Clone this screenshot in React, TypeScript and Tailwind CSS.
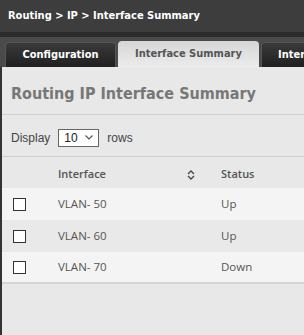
import React from 'react';

const rows = [
  { name: 'VLAN- 50', status: 'Up' },
  { name: 'VLAN- 60', status: 'Up' },
  { name: 'VLAN- 70', status: 'Down' },
];

const SortIcon = () => (
  <svg width="8" height="10" viewBox="0 0 8 10" fill="none" stroke="#444" strokeWidth="1.3">
    <path d="M1 4 L4 1 L7 4" />
    <path d="M1 6 L4 9 L7 6" />
  </svg>
);

export default function App() {
  return (
    <div className="w-[304px] h-[335px] overflow-hidden flex flex-col bg-[#4a4a4a]">
      {/* breadcrumb */}
      <div className="h-[32px] shrink-0 bg-[#3d3d3d] flex items-center px-2 text-white font-bold text-[11px] font-['DejaVu_Sans_Condensed','DejaVu_Sans',sans-serif]">
        Routing &gt; IP &gt; Interface Summary
      </div>
      <div className="h-[5px] shrink-0 bg-[#2c2c2c]" />
      {/* tabs */}
      <div className="h-[30px] shrink-0 flex items-end pl-[5px] gap-[2px] font-['DejaVu_Sans_Condensed','DejaVu_Sans',sans-serif] font-bold text-[11px] whitespace-nowrap">
        <div className="w-[111px] h-[25px] shrink-0 rounded-t-[4px] bg-gradient-to-b from-[#3a3a3a] to-[#202020] border border-b-0 border-[#555] text-white flex items-center justify-center">
          Configuration
        </div>
        <div className="w-[141px] h-[26px] shrink-0 rounded-t-[4px] bg-gradient-to-b from-[#d6d6d6] to-[#ececec] text-[#555] flex items-center justify-center">
          Interface Summary
        </div>
        <div className="w-[120px] h-[25px] shrink-0 rounded-t-[4px] bg-gradient-to-b from-[#3a3a3a] to-[#202020] border border-b-0 border-[#555] text-white flex items-center pl-[16px]">
          Interface Configuration
        </div>
      </div>
      {/* panel */}
      <div className="flex-1 bg-[#e8e8e8] border-l-2 border-[#333] flex flex-col">
        <div className="h-[48px] shrink-0 flex items-center pt-[6px] pl-[9px] border-b border-[#cfcfcf] text-[#777] font-bold text-[16px] font-['DejaVu_Sans_Condensed','DejaVu_Sans',sans-serif]">
          Routing IP Interface Summary
        </div>
        <div className="h-[42px] shrink-0 flex items-center pt-[4px] pl-[9px] gap-[8px] border-b border-[#cfcfcf] text-[12px] text-[#444] font-['Liberation_Sans',Arial,sans-serif]">
          <span>Display</span>
          <div className="w-[41px] h-[18px] bg-white border border-[#666] flex items-center justify-between pl-[5px] pr-[5px] text-[#222]">
            <span>10</span>
            <svg width="8" height="5" viewBox="0 0 8 5" fill="none" stroke="#555" strokeWidth="1.2">
              <path d="M0.5 0.5 L4 4 L7.5 0.5" />
            </svg>
          </div>
          <span>rows</span>
        </div>
        <div className="h-[31px] shrink-0 flex items-center pt-[4px] text-[11px] font-semibold text-[#555] font-['Open_Sans',sans-serif]">
          <div className="w-[56px] shrink-0" />
          <div className="w-[129px] shrink-0">Interface</div>
          <div className="w-[34px] shrink-0"><SortIcon /></div>
          <div>Status</div>
        </div>
        {rows.map((r, i) => (
          <div
            key={r.name}
            className={`h-[32px] shrink-0 flex items-center text-[11.5px] text-[#555] font-['Open_Sans',sans-serif] ${i % 2 === 0 ? 'bg-[#f4f4f4]' : 'bg-[#e9e9e9]'} ${i === rows.length - 1 ? 'border-b-2 border-[#d4d4d4]' : ''}`}
          >
            <div className="w-[56px] shrink-0 pl-[11px]">
              <div className="w-[13px] h-[13px] border border-[#333] bg-white" />
            </div>
            <div className="w-[163px] shrink-0">{r.name}</div>
            <div>{r.status}</div>
          </div>
        ))}
      </div>
    </div>
  );
}
